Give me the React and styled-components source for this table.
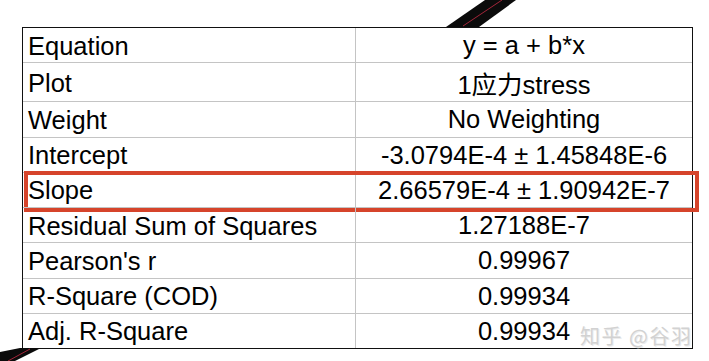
import React from "react";
import styled, { createGlobalStyle } from "styled-components";

const GlobalStyle = createGlobalStyle`
  html, body {
    margin: 0;
    padding: 0;
    background: #ffffff;
  }
  body {
    font-family: "Liberation Sans", Arial, sans-serif;
    color: #000;
  }
`;

const Page = styled.div`
  position: relative;
  width: 709px;
  height: 361px;
  overflow: hidden;
  box-sizing: border-box;
  padding: 27px 0 0 22px;
  background: #fff;
`;

const Table = styled.div`
  display: flex;
  flex-direction: column;
  width: 671px;
  height: 322px;
  box-sizing: border-box;
  border: 1px solid #111;
`;

const Row = styled.div`
  position: relative;
  flex: 1;
  display: grid;
  grid-template-columns: 332px 1fr;
  border-top: ${({ first }) => (first ? "none" : "1px solid #c4c4c4")};
  ${({ highlight }) =>
    highlight &&
    `
    &::after {
      content: "";
      position: absolute;
      left: 1px;
      top: -2px;
      right: -7px;
      bottom: -5px;
      border: 4px solid #d6442b;
      pointer-events: none;
    }
  `}
`;

const Label = styled.div`
  display: flex;
  align-items: center;
  padding-left: 5px;
  padding-top: 2px;
  font-size: 25.5px;
  white-space: nowrap;
`;

const Value = styled.div`
  display: flex;
  align-items: center;
  justify-content: center;
  padding-top: 1px;
  border-left: 1px solid #c4c4c4;
  font-size: 25.5px;
  white-space: nowrap;
  font-family: "Liberation Sans", "Noto Sans CJK SC", Arial, sans-serif;
`;

const Watermark = styled.div`
  position: absolute;
  left: 580px;
  top: 321px;
  font-size: 20px;
  letter-spacing: 1.5px;
  color: #d2d2d2;
  font-family: "Noto Sans CJK SC", "Liberation Sans", sans-serif;
  text-shadow: 1px 1px 0 #ececec;
  white-space: nowrap;
`;

const Strokes = styled.svg`
  position: absolute;
  left: 0;
  top: 0;
  pointer-events: none;
`;

const rows = [
  ["Equation", "y = a + b*x"],
  ["Plot", "1应力stress"],
  ["Weight", "No Weighting"],
  ["Intercept", "-3.0794E-4 ± 1.45848E-6"],
  ["Slope", "2.66579E-4 ± 1.90942E-7", true],
  ["Residual Sum of Squares", "1.27188E-7"],
  ["Pearson's r", "0.99967"],
  ["R-Square (COD)", "0.99934"],
  ["Adj. R-Square", "0.99934"],
];

export default function App() {
  return (
    <>
      <GlobalStyle />
      <Page>
        <Table>
          {rows.map(([label, value, hl], i) => (
            <Row key={label} first={i === 0} highlight={hl}>
              <Label>{label}</Label>
              <Value>{value}</Value>
            </Row>
          ))}
        </Table>
        <Watermark>知乎 @谷羽</Watermark>
        <Strokes width="709" height="361" viewBox="0 0 709 361">
          <polygon points="446,27 479,27 516,0 485,0" fill="#0b0b0b" />
          <line x1="463" y1="26" x2="502" y2="0" stroke="#a3263a" strokeWidth="1" />
          <polygon points="0,352 20,348 41,348 15,361 0,361" fill="#0b0b0b" />
          <line x1="8" y1="361" x2="30" y2="349" stroke="#a3263a" strokeWidth="1" />
        </Strokes>
      </Page>
    </>
  );
}
